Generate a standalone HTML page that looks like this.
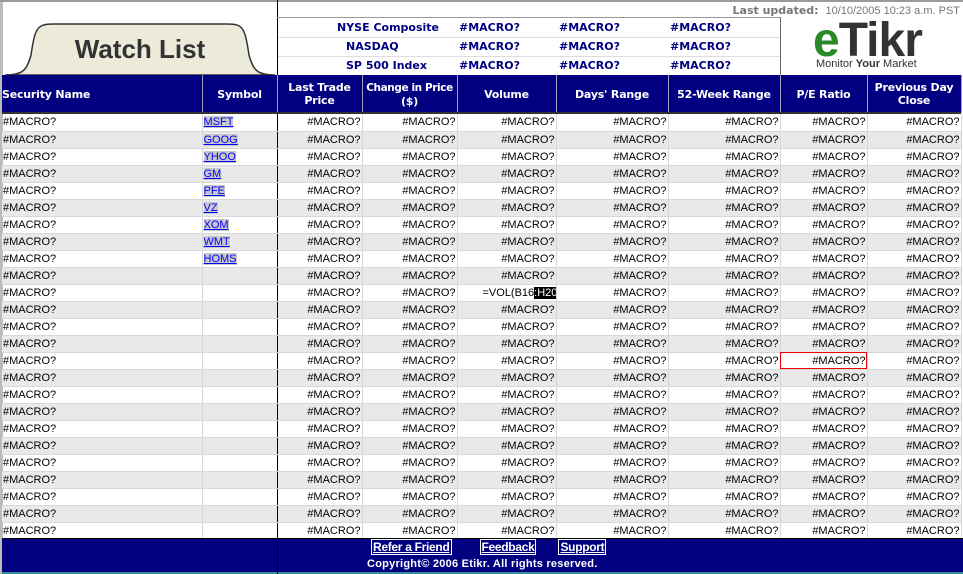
<!DOCTYPE html>
<html><head><meta charset="utf-8"><style>
*{margin:0;padding:0;box-sizing:border-box}
body{width:963px;height:574px;position:relative;background:#fff;font-family:"Liberation Sans",Arial,sans-serif;overflow:hidden}
.abs{position:absolute}
.b{font-family:"DejaVu Sans",Verdana,sans-serif;font-weight:bold}
table{border-collapse:collapse;table-layout:fixed;position:absolute;left:2px}
#g td{height:17px;font-size:11px;border-right:1px solid #d8d8d8;border-bottom:1px solid #d8d8d8;text-align:right;padding:0 1px;white-space:nowrap;overflow:hidden;color:#000}
#g td:first-child{text-align:left}
#g td:nth-child(2){text-align:left;border-right:1px solid #000}
#g tr:nth-child(even) td{background:#e9e9e9}
#g a{color:#00f;background:#c8c8c8;text-decoration:underline}
#h td{height:38px;background:#000080;color:#fff;font-size:11px;text-align:center;border-right:1px solid #a0a0c0;line-height:13px;font-family:"DejaVu Sans",Verdana,sans-serif;font-weight:bold;letter-spacing:-0.2px}
#h td:first-child{text-align:left}
#idx td{height:19px;font-size:11px;color:#000080;font-family:"DejaVu Sans",Verdana,sans-serif;font-weight:bold;border-bottom:1px solid #ddd;padding-left:2px}
</style></head><body>
<div class="abs" style="left:0;top:0;width:3px;height:574px;background:#bbb"></div>
<div class="abs" style="left:0;top:0;width:963px;height:2px;background:#999"></div>
<div class="abs" style="left:277px;top:0;width:1px;height:75px;background:#000"></div>
<svg class="abs" style="left:3px;top:20px" width="274" height="56"><path d="M2 55 C20 55 24 50 28 35 C32 8 34 4 50 4 L225 4 C240 4 242 8 246 35 C250 50 254 55 272 55 Z" fill="#ecebd9" stroke="#333" stroke-width="1.5"/><text x="137" y="38" text-anchor="middle" font-family="Liberation Sans" font-size="26" font-weight="bold" fill="#333">Watch List</text></svg>
<div class="abs b" style="left:640px;top:4px;font-size:11px;color:#777;width:320px;text-align:right;white-space:nowrap">Last updated: <span style="font-family:'Liberation Sans';font-weight:normal;font-size:11px">&nbsp;10/10/2005 10:23 a.m. PST</span></div>
<div class="abs" style="left:277px;top:17px;width:686px;height:1px;background:#999"></div>
<table id="idx" style="left:278px;top:18px;width:502px">
<colgroup><col style="width:179px"><col style="width:100px"><col style="width:111px"><col style="width:112px"></colgroup>
<tr><td style="text-align:right;padding-right:18px">NYSE Composite</td><td>#MACRO?</td><td>#MACRO?</td><td>#MACRO?</td></tr>
<tr><td style="padding-left:68px">NASDAQ</td><td>#MACRO?</td><td>#MACRO?</td><td>#MACRO?</td></tr>
<tr><td style="padding-left:68px">SP 500 Index</td><td>#MACRO?</td><td>#MACRO?</td><td>#MACRO?</td></tr>
</table>
<div class="abs" style="left:780px;top:17px;width:183px;height:58px;border-left:1px solid #666;background:#fff"></div>
<div class="abs" style="left:813px;top:16px;font-family:'Liberation Sans';font-weight:bold;font-size:48px;line-height:50px;color:#333;letter-spacing:-1px"><span style="color:#2a8a2a">e</span>Tikr</div>
<div class="abs" style="left:816px;top:58px;font-size:11px;color:#333">Monitor <b>Your</b> Market</div>
<table id="h" style="top:75px;width:959px">
<colgroup><col style="width:200px"><col style="width:75px"><col style="width:85px"><col style="width:95px"><col style="width:99px"><col style="width:112px"><col style="width:112px"><col style="width:87px"><col style="width:94px"></colgroup>
<tr><td>Security Name</td><td>Symbol</td><td>Last Trade Price</td><td><span style="white-space:nowrap;font-size:10.5px;letter-spacing:-0.4px">Change in Price</span><br>($)</td><td>Volume</td><td>Days' Range</td><td>52-Week Range</td><td>P/E Ratio</td><td>Previous Day Close</td></tr>
</table>
<div class="abs" style="left:2px;top:112px;width:959px;height:2px;background:#333"></div>
<table id="g" style="top:114px;width:959px">
<colgroup><col style="width:200px"><col style="width:75px"><col style="width:85px"><col style="width:95px"><col style="width:99px"><col style="width:112px"><col style="width:112px"><col style="width:87px"><col style="width:94px"></colgroup>
<tr><td>#MACRO?</td><td><a>MSFT</a></td><td>#MACRO?</td><td>#MACRO?</td><td>#MACRO?</td><td>#MACRO?</td><td>#MACRO?</td><td>#MACRO?</td><td>#MACRO?</td></tr>
<tr><td>#MACRO?</td><td><a>GOOG</a></td><td>#MACRO?</td><td>#MACRO?</td><td>#MACRO?</td><td>#MACRO?</td><td>#MACRO?</td><td>#MACRO?</td><td>#MACRO?</td></tr>
<tr><td>#MACRO?</td><td><a>YHOO</a></td><td>#MACRO?</td><td>#MACRO?</td><td>#MACRO?</td><td>#MACRO?</td><td>#MACRO?</td><td>#MACRO?</td><td>#MACRO?</td></tr>
<tr><td>#MACRO?</td><td><a>GM</a></td><td>#MACRO?</td><td>#MACRO?</td><td>#MACRO?</td><td>#MACRO?</td><td>#MACRO?</td><td>#MACRO?</td><td>#MACRO?</td></tr>
<tr><td>#MACRO?</td><td><a>PFE</a></td><td>#MACRO?</td><td>#MACRO?</td><td>#MACRO?</td><td>#MACRO?</td><td>#MACRO?</td><td>#MACRO?</td><td>#MACRO?</td></tr>
<tr><td>#MACRO?</td><td><a>VZ</a></td><td>#MACRO?</td><td>#MACRO?</td><td>#MACRO?</td><td>#MACRO?</td><td>#MACRO?</td><td>#MACRO?</td><td>#MACRO?</td></tr>
<tr><td>#MACRO?</td><td><a>XOM</a></td><td>#MACRO?</td><td>#MACRO?</td><td>#MACRO?</td><td>#MACRO?</td><td>#MACRO?</td><td>#MACRO?</td><td>#MACRO?</td></tr>
<tr><td>#MACRO?</td><td><a>WMT</a></td><td>#MACRO?</td><td>#MACRO?</td><td>#MACRO?</td><td>#MACRO?</td><td>#MACRO?</td><td>#MACRO?</td><td>#MACRO?</td></tr>
<tr><td>#MACRO?</td><td><a>HOMS</a></td><td>#MACRO?</td><td>#MACRO?</td><td>#MACRO?</td><td>#MACRO?</td><td>#MACRO?</td><td>#MACRO?</td><td>#MACRO?</td></tr>
<tr><td>#MACRO?</td><td></td><td>#MACRO?</td><td>#MACRO?</td><td>#MACRO?</td><td>#MACRO?</td><td>#MACRO?</td><td>#MACRO?</td><td>#MACRO?</td></tr>
<tr><td>#MACRO?</td><td></td><td>#MACRO?</td><td>#MACRO?</td><td style="text-align:left;padding-left:25px">=VOL(B16<span style="background:#000;color:#fff">:H20</span></td><td>#MACRO?</td><td>#MACRO?</td><td>#MACRO?</td><td>#MACRO?</td></tr>
<tr><td>#MACRO?</td><td></td><td>#MACRO?</td><td>#MACRO?</td><td>#MACRO?</td><td>#MACRO?</td><td>#MACRO?</td><td>#MACRO?</td><td>#MACRO?</td></tr>
<tr><td>#MACRO?</td><td></td><td>#MACRO?</td><td>#MACRO?</td><td>#MACRO?</td><td>#MACRO?</td><td>#MACRO?</td><td>#MACRO?</td><td>#MACRO?</td></tr>
<tr><td>#MACRO?</td><td></td><td>#MACRO?</td><td>#MACRO?</td><td>#MACRO?</td><td>#MACRO?</td><td>#MACRO?</td><td>#MACRO?</td><td>#MACRO?</td></tr>
<tr><td>#MACRO?</td><td></td><td>#MACRO?</td><td>#MACRO?</td><td>#MACRO?</td><td>#MACRO?</td><td>#MACRO?</td><td style="outline:1px solid #e00;outline-offset:-1px">#MACRO?</td><td>#MACRO?</td></tr>
<tr><td>#MACRO?</td><td></td><td>#MACRO?</td><td>#MACRO?</td><td>#MACRO?</td><td>#MACRO?</td><td>#MACRO?</td><td>#MACRO?</td><td>#MACRO?</td></tr>
<tr><td>#MACRO?</td><td></td><td>#MACRO?</td><td>#MACRO?</td><td>#MACRO?</td><td>#MACRO?</td><td>#MACRO?</td><td>#MACRO?</td><td>#MACRO?</td></tr>
<tr><td>#MACRO?</td><td></td><td>#MACRO?</td><td>#MACRO?</td><td>#MACRO?</td><td>#MACRO?</td><td>#MACRO?</td><td>#MACRO?</td><td>#MACRO?</td></tr>
<tr><td>#MACRO?</td><td></td><td>#MACRO?</td><td>#MACRO?</td><td>#MACRO?</td><td>#MACRO?</td><td>#MACRO?</td><td>#MACRO?</td><td>#MACRO?</td></tr>
<tr><td>#MACRO?</td><td></td><td>#MACRO?</td><td>#MACRO?</td><td>#MACRO?</td><td>#MACRO?</td><td>#MACRO?</td><td>#MACRO?</td><td>#MACRO?</td></tr>
<tr><td>#MACRO?</td><td></td><td>#MACRO?</td><td>#MACRO?</td><td>#MACRO?</td><td>#MACRO?</td><td>#MACRO?</td><td>#MACRO?</td><td>#MACRO?</td></tr>
<tr><td>#MACRO?</td><td></td><td>#MACRO?</td><td>#MACRO?</td><td>#MACRO?</td><td>#MACRO?</td><td>#MACRO?</td><td>#MACRO?</td><td>#MACRO?</td></tr>
<tr><td>#MACRO?</td><td></td><td>#MACRO?</td><td>#MACRO?</td><td>#MACRO?</td><td>#MACRO?</td><td>#MACRO?</td><td>#MACRO?</td><td>#MACRO?</td></tr>
<tr><td>#MACRO?</td><td></td><td>#MACRO?</td><td>#MACRO?</td><td>#MACRO?</td><td>#MACRO?</td><td>#MACRO?</td><td>#MACRO?</td><td>#MACRO?</td></tr>
<tr><td>#MACRO?</td><td></td><td>#MACRO?</td><td>#MACRO?</td><td>#MACRO?</td><td>#MACRO?</td><td>#MACRO?</td><td>#MACRO?</td><td>#MACRO?</td></tr>
</table>
<div class="abs" style="left:2px;top:538px;width:961px;height:34px;background:#000080;border-top:1px solid #000"></div>
<div class="abs" style="left:2px;top:572px;width:961px;height:2px;background:#3a8a9a"></div>
<div class="abs" style="left:277px;top:538px;width:1px;height:36px;background:#000"></div>
<div class="abs b" style="left:371px;top:540px;font-size:12px;color:#fff;white-space:nowrap;font-family:'Liberation Sans';letter-spacing:-0.3px"><span style="text-decoration:underline;border:1px solid #fff;padding:0 1px">Refer a Friend</span><span style="display:inline-block;width:28px"></span><span style="text-decoration:underline;border:1px solid #fff;padding:0 1px">Feedback</span><span style="display:inline-block;width:22px"></span><span style="text-decoration:underline;border:1px solid #fff;padding:0 1px">Support</span></div>
<div class="abs b" style="left:367px;top:558px;font-size:11px;color:#fff;white-space:nowrap;font-family:'Liberation Sans';letter-spacing:0.25px">Copyright© 2006 Etikr. All rights reserved.</div>
</body></html>
